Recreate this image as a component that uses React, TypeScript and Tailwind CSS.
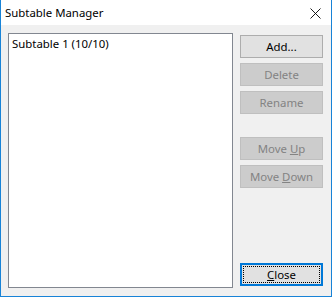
import React from 'react';

const font = { fontFamily: '"Segoe UI", "Noto Sans", "Liberation Sans", sans-serif' };

interface BtnProps {
  label: React.ReactNode;
  disabled?: boolean;
  isDefault?: boolean;
}

const Btn: React.FC<BtnProps> = ({ label, disabled, isDefault }) => {
  if (isDefault) {
    return (
      <div className="h-[23px] w-[83px] border-2 border-[#0078d7] bg-[#e1e1e1] p-px">
        <div className="flex h-full w-full items-center justify-center border border-dotted border-black text-[11.4px] leading-none text-black">
          {label}
        </div>
      </div>
    );
  }
  return (
    <div
      className={
        disabled
          ? 'flex h-[23px] w-[83px] items-center justify-center border border-[#bfbfbf] bg-[#cccccc] text-[11.4px] leading-none text-[#838383]'
          : 'flex h-[23px] w-[83px] items-center justify-center border border-[#adadad] bg-[#e1e1e1] text-[11.4px] leading-none text-black'
      }
    >
      {label}
    </div>
  );
};

export default function App() {
  return (
    <div className="h-[297px] w-[332px] border-x border-b border-[#1883d7] bg-[#f0f0f0]" style={font}>
      {/* Title bar */}
      <div className="flex h-[25px] items-center justify-between bg-white pl-[4px] pr-[10px]">
        <span className="text-[11.4px] text-black">Subtable Manager</span>
        <svg width="11" height="11" viewBox="0 0 11 11" className="mt-[1px]">
          <path d="M0.5 0.5 L10.5 10.5 M10.5 0.5 L0.5 10.5" stroke="#000" strokeWidth="0.9" />
        </svg>
      </div>

      <div className="flex h-[271px] pl-[7px] pt-[8px] pb-[8px] pr-[8px]">
        {/* List */}
        <div className="h-[255px] w-[225px] border border-[#828790] bg-white px-[3px] pt-[2px]">
          <div className="text-[11.4px] leading-[16px] text-black">Subtable 1 (10/10)</div>
        </div>

        {/* Buttons */}
        <div className="ml-[7px] flex flex-col pt-[2px]">
          <Btn label="Add..." />
          <div className="mt-[5px]">
            <Btn label="Delete" disabled />
          </div>
          <div className="mt-[5px]">
            <Btn label="Rename" disabled />
          </div>
          <div className="mt-[23px]">
            <Btn label={<span>Move <u>U</u>p</span>} disabled />
          </div>
          <div className="mt-[5px]">
            <Btn label={<span>Move <u>D</u>own</span>} disabled />
          </div>
          <div className="mt-auto mb-[2px]">
            <Btn label={<span><u>C</u>lose</span>} isDefault />
          </div>
        </div>
      </div>
    </div>
  );
}
